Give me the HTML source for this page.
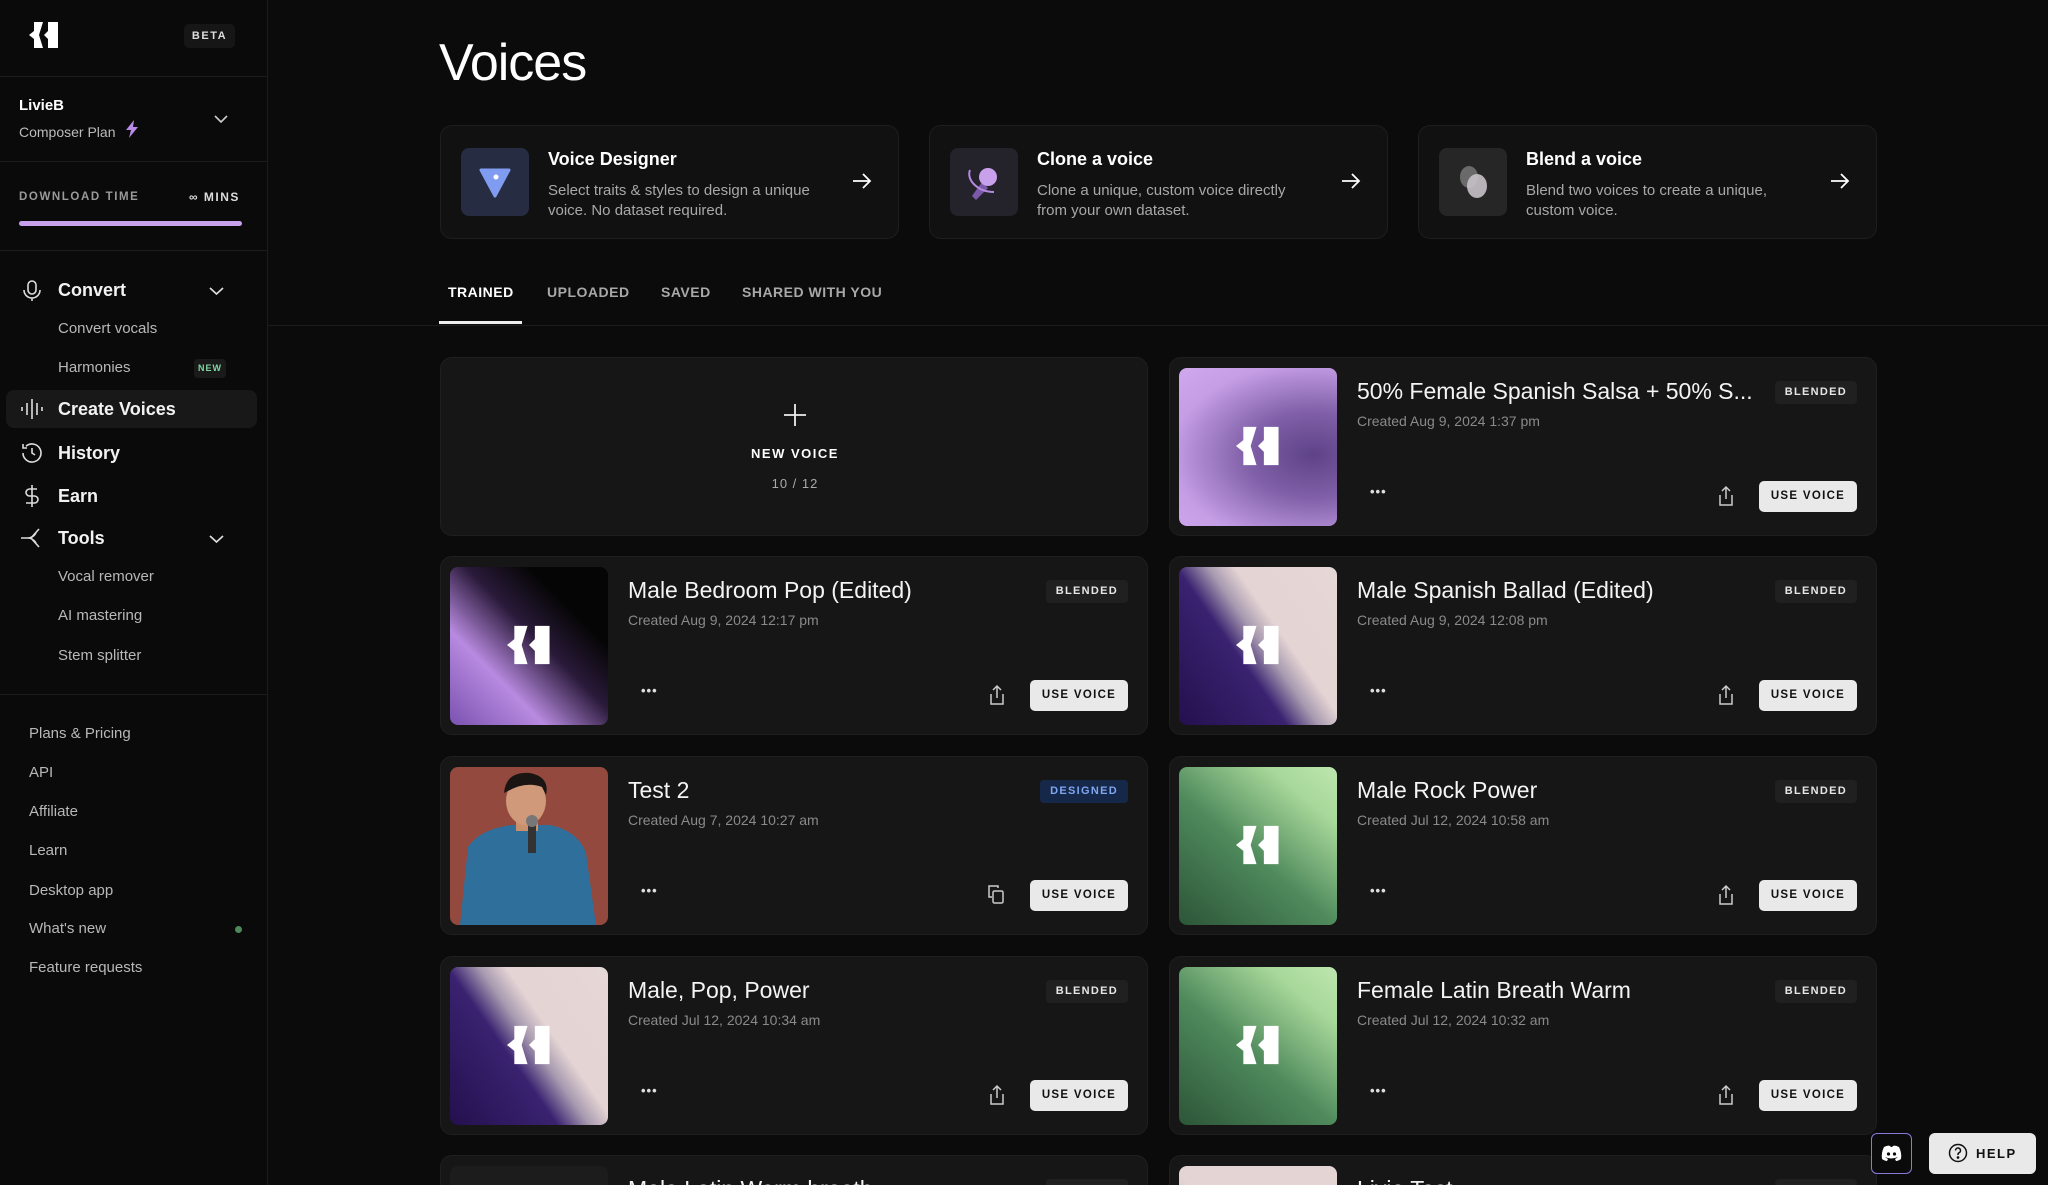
<!DOCTYPE html>
<html style="width:2048px;height:1185px;overflow:hidden"><head><meta charset="utf-8">
<style>
*{box-sizing:border-box;margin:0;padding:0}
html,body{width:2048px;height:1185px;overflow:hidden}
body{background:#0b0b0b;font-family:"Liberation Sans",sans-serif;color:#fff;position:relative}
.abs{position:absolute}
.side{position:absolute;left:0;top:0;width:268px;height:1185px;background:#0a0a0a;border-right:1px solid #1c1c1c}
.hr{position:absolute;left:0;width:268px;height:1px;background:#1c1c1c}
.nav{position:absolute;left:58px;font-size:18px;font-weight:bold;color:#f2f2f2}
.sub{position:absolute;left:58px;font-size:15px;color:#b8b8b8}
.low{position:absolute;left:29px;font-size:15px;color:#b8b8b8}
.ic{position:absolute;left:20px}
.card{position:absolute;width:708px;height:179px;background:#161616;border:1px solid #1f1f1f;border-radius:12px}
.card.cut{height:30px;overflow:hidden;border-bottom:none;border-radius:12px 12px 0 0}
.thumb{position:absolute;left:9px;top:10px;width:158px;height:158px;border-radius:8px;overflow:hidden}
.thumb svg.lg{position:absolute;left:57px;top:58px}
.title{position:absolute;left:187px;top:20px;font-size:23px;color:#f4f4f4;white-space:nowrap}
.date{position:absolute;left:187px;top:55px;font-size:14px;color:#8a8a8a}
.badge{position:absolute;right:19px;top:23px;height:23px;padding:0 10px;line-height:23px;font-size:11px;font-weight:bold;letter-spacing:1.3px;background:#202020;color:#e6e6e6;border-radius:4px}
.dots{position:absolute;left:200px;top:126px;font-size:13px;letter-spacing:1px;color:#ddd;font-weight:bold}
.use{position:absolute;right:19px;top:123px;width:98px;height:31px;background:#e9e9e9;color:#111;border-radius:5px;font-size:11.5px;font-weight:bold;letter-spacing:1.3px;text-align:center;line-height:31px}
.share{position:absolute;right:141px;top:127px}
.act{position:absolute;top:125px;width:459px;height:114px;background:#111;border:1px solid #1e1e1e;border-radius:12px}
.act .box{position:absolute;left:20px;top:22px;width:68px;height:68px;border-radius:8px}
.act .t{position:absolute;left:107px;top:23px;font-size:18px;font-weight:bold}
.act .d{position:absolute;left:107px;top:55px;font-size:15px;line-height:20px;color:#a8a8a8}
.act .ar{position:absolute;right:26px;top:46px}
.tab{position:absolute;top:284px;font-size:14px;font-weight:bold;letter-spacing:0.5px;color:#a8a8a8}
</style></head><body>

<div class="side">
  <svg class="abs" style="left:29px;top:22px" width="30" height="26" viewBox="0 0 30 26"><path d="M5 0H14L10 13L14 26H5V17L0 13L5 9Z" fill="#fff"/><path d="M19 0H29V26H19V17L15 13L19 9Z" fill="#fff"/></svg>
  <div class="abs" style="left:184px;top:24px;width:51px;height:24px;background:#161616;border-radius:5px;font-size:11px;font-weight:bold;letter-spacing:1.5px;text-align:center;line-height:24px;color:#ddd">BETA</div>
  <div class="hr" style="top:76px"></div>
  <div class="abs" style="left:19px;top:97px;font-size:15px;font-weight:bold">LivieB</div>
  <div class="abs" style="left:19px;top:124px;font-size:14px;color:#bbb">Composer Plan</div>
  <svg class="abs" style="left:125px;top:120px" width="14" height="18" viewBox="0 0 14 18"><path d="M9 0L1 10H6L4 18L13 7H8Z" fill="#b98ae6"/></svg>
  <svg class="abs" style="left:214px;top:114px" width="14" height="10" viewBox="0 0 14 10"><path d="M1 2L7 8L13 2" stroke="#ccc" stroke-width="1.6" fill="none"/></svg>
  <div class="hr" style="top:161px"></div>
  <div class="abs" style="left:19px;top:191px;font-size:11.5px;font-weight:bold;letter-spacing:1.6px;color:#9a9a9a">DOWNLOAD TIME</div>
  <div class="abs" style="left:189px;top:190px;font-size:12px;font-weight:bold;letter-spacing:1.5px;color:#ddd">∞ MINS</div>
  <div class="abs" style="left:19px;top:221px;width:223px;height:5px;border-radius:3px;background:#c9a0ec"></div>
  <div class="hr" style="top:250px"></div>

  <svg class="ic" style="top:279px" width="24" height="24" viewBox="0 0 24 24" fill="none" stroke="#ddd" stroke-width="1.6"><rect x="8" y="2" width="8" height="13" rx="4"/><path d="M4 11a8 8 0 0 0 16 0M12 19v3"/></svg>
  <div class="nav" style="top:280px">Convert</div>
  <svg class="abs" style="left:209px;top:286px" width="15" height="10" viewBox="0 0 15 10"><path d="M1 2L7.5 8L14 2" stroke="#ddd" stroke-width="1.7" fill="none"/></svg>
  <div class="sub" style="top:320px">Convert vocals</div>
  <div class="sub" style="top:359px">Harmonies</div>
  <div class="abs" style="left:194px;top:359px;width:32px;height:19px;background:#1a1a1a;border-radius:4px;font-size:9px;font-weight:bold;letter-spacing:1px;color:#7fd6a0;text-align:center;line-height:19px">NEW</div>
  <div class="abs" style="left:6px;top:390px;width:251px;height:38px;background:#181818;border-radius:8px"></div>
  <svg class="ic" style="top:398px" width="24" height="22" viewBox="0 0 24 22" stroke="#ddd" stroke-width="1.6"><path d="M2 9v4M7 5v12M12 1v20M17 5v12M22 9v4"/></svg>
  <div class="nav" style="top:399px">Create Voices</div>
  <svg class="ic" style="top:441px" width="24" height="24" viewBox="0 0 24 24" fill="none" stroke="#ddd" stroke-width="1.6"><path d="M3 12a9 9 0 1 0 3-6.7M3 3v4h4M12 7v5l3 2"/></svg>
  <div class="nav" style="top:443px">History</div>
  <svg class="ic" style="top:484px" width="24" height="24" viewBox="0 0 24 24" fill="none" stroke="#ddd" stroke-width="1.6"><path d="M12 1v22M17 5H9.5a3.5 3.5 0 0 0 0 7h5a3.5 3.5 0 0 1 0 7H6"/></svg>
  <div class="nav" style="top:486px">Earn</div>
  <svg class="ic" style="top:526px" width="24" height="24" viewBox="0 0 24 24" fill="none" stroke="#ddd" stroke-width="1.6"><path d="M1 12h7M19 3l-8 9 8 9M8 12c3 0 6-2 8-5M8 12c3 0 6 2 8 5"/></svg>
  <div class="nav" style="top:528px">Tools</div>
  <svg class="abs" style="left:209px;top:534px" width="15" height="10" viewBox="0 0 15 10"><path d="M1 2L7.5 8L14 2" stroke="#ddd" stroke-width="1.7" fill="none"/></svg>
  <div class="sub" style="top:568px">Vocal remover</div>
  <div class="sub" style="top:607px">AI mastering</div>
  <div class="sub" style="top:647px">Stem splitter</div>
  <div class="hr" style="top:694px"></div>
  <div class="low" style="top:725px">Plans &amp; Pricing</div>
  <div class="low" style="top:764px">API</div>
  <div class="low" style="top:803px">Affiliate</div>
  <div class="low" style="top:842px">Learn</div>
  <div class="low" style="top:882px">Desktop app</div>
  <div class="low" style="top:920px">What's new</div>
  <div class="abs" style="left:235px;top:926px;width:7px;height:7px;border-radius:50%;background:#4c8a5c"></div>
  <div class="low" style="top:959px">Feature requests</div>
</div>

<div class="abs" style="left:439px;top:33px;font-size:52px;letter-spacing:-1px">Voices</div>

<div class="act" style="left:440px">
  <div class="box" style="background:#262d42"><svg style="position:absolute;left:18px;top:20px" width="32" height="30" viewBox="0 0 32 30"><path d="M2 2H30L16 28Z" fill="#7f9cf0" stroke="#7f9cf0" stroke-width="3" stroke-linejoin="round"/><circle cx="17" cy="9" r="2.5" fill="#fff"/></svg></div>
  <div class="t">Voice Designer</div>
  <div class="d">Select traits &amp; styles to design a unique<br>voice. No dataset required.</div>
  <svg class="ar" width="20" height="18" viewBox="0 0 20 18" fill="none" stroke="#fff" stroke-width="1.8"><path d="M1 9h17M11 2l7 7-7 7"/></svg>
</div>
<div class="act" style="left:929px">
  <div class="box" style="background:#24222a"><svg style="position:absolute;left:14px;top:14px" width="40" height="40" viewBox="0 0 40 40"><path d="M8 34L18 20L24 26L12 38Z" fill="#7a5aa8"/><circle cx="24" cy="15" r="9" fill="#c9a0ec"/><path d="M6 8C2 18 14 30 30 30" stroke="#b48ae0" stroke-width="2" fill="none"/></svg></div>
  <div class="t">Clone a voice</div>
  <div class="d">Clone a unique, custom voice directly<br>from your own dataset.</div>
  <svg class="ar" width="20" height="18" viewBox="0 0 20 18" fill="none" stroke="#fff" stroke-width="1.8"><path d="M1 9h17M11 2l7 7-7 7"/></svg>
</div>
<div class="act" style="left:1418px">
  <div class="box" style="background:#262626"><svg style="position:absolute;left:12px;top:15px" width="44" height="40" viewBox="0 0 44 40"><ellipse cx="18" cy="14" rx="9" ry="11" fill="#6a6a6a"/><ellipse cx="26" cy="23" rx="10" ry="12" fill="#c8c2c8" opacity=".9"/></svg></div>
  <div class="t">Blend a voice</div>
  <div class="d">Blend two voices to create a unique,<br>custom voice.</div>
  <svg class="ar" width="20" height="18" viewBox="0 0 20 18" fill="none" stroke="#fff" stroke-width="1.8"><path d="M1 9h17M11 2l7 7-7 7"/></svg>
</div>

<div class="tab" style="left:448px;color:#fff">TRAINED</div>
<div class="tab" style="left:547px">UPLOADED</div>
<div class="tab" style="left:661px">SAVED</div>
<div class="tab" style="left:742px">SHARED WITH YOU</div>
<div class="abs" style="left:268px;top:325px;width:1780px;height:1px;background:#1c1c1c"></div>
<div class="abs" style="left:439px;top:321px;width:83px;height:3px;background:#eee"></div>

<div class="card" style="left:440px;top:357px">
  <svg class="abs" style="left:342px;top:45px" width="24" height="24" viewBox="0 0 24 24" stroke="#eee" stroke-width="1.8"><path d="M12 1v22M1 12h22"/></svg>
  <div class="abs" style="left:0;width:708px;text-align:center;top:88px;font-size:13px;font-weight:bold;letter-spacing:1.5px">NEW VOICE</div>
  <div class="abs" style="left:0;width:708px;text-align:center;top:118px;font-size:13px;color:#aaa;letter-spacing:1px">10 / 12</div>
</div>

<div class="card" style="left:1169px;top:357px">
  <div class="thumb" style="background:radial-gradient(ellipse at 85% 55%,#5e4288 0%,#8060a8 35%,#c59ee6 75%,#cfa8ee 100%)"><svg class="lg" width="44" height="40" viewBox="0 0 30 26"><path d="M5 0H14L10 13L14 26H5V17L0 13L5 9Z" fill="#fff"/><path d="M19 0H29V26H19V17L15 13L19 9Z" fill="#fff"/></svg></div>
  <div class="title">50% Female Spanish Salsa + 50% S...</div>
  <div class="date">Created Aug 9, 2024 1:37 pm</div>
  <div class="badge">BLENDED</div>
  <div class="dots">•••</div>
  <svg class="share" width="18" height="22" viewBox="0 0 18 22" fill="none" stroke="#ccc" stroke-width="1.5"><path d="M9 14V2M5 6l4-4 4 4M3 10v10h12V10"/></svg>
  <div class="use">USE VOICE</div>
</div>

<div class="card" style="left:440px;top:556px">
  <div class="thumb" style="background:linear-gradient(45deg,#7a52b0 0%,#b88ae0 30%,#2a1a3a 55%,#050505 75%)"><svg class="lg" width="44" height="40" viewBox="0 0 30 26"><path d="M5 0H14L10 13L14 26H5V17L0 13L5 9Z" fill="#fff"/><path d="M19 0H29V26H19V17L15 13L19 9Z" fill="#fff"/></svg></div>
  <div class="title">Male Bedroom Pop (Edited)</div>
  <div class="date">Created Aug 9, 2024 12:17 pm</div>
  <div class="badge">BLENDED</div>
  <div class="dots">•••</div>
  <svg class="share" width="18" height="22" viewBox="0 0 18 22" fill="none" stroke="#ccc" stroke-width="1.5"><path d="M9 14V2M5 6l4-4 4 4M3 10v10h12V10"/></svg>
  <div class="use">USE VOICE</div>
</div>

<div class="card" style="left:1169px;top:556px">
  <div class="thumb" style="background:linear-gradient(55deg,#24104e 0%,#3a2270 40%,#a89ab0 52%,#e4d4d4 62%,#e6d8d6 100%)"><svg class="lg" width="44" height="40" viewBox="0 0 30 26"><path d="M5 0H14L10 13L14 26H5V17L0 13L5 9Z" fill="#fff"/><path d="M19 0H29V26H19V17L15 13L19 9Z" fill="#fff"/></svg></div>
  <div class="title">Male Spanish Ballad (Edited)</div>
  <div class="date">Created Aug 9, 2024 12:08 pm</div>
  <div class="badge">BLENDED</div>
  <div class="dots">•••</div>
  <svg class="share" width="18" height="22" viewBox="0 0 18 22" fill="none" stroke="#ccc" stroke-width="1.5"><path d="M9 14V2M5 6l4-4 4 4M3 10v10h12V10"/></svg>
  <div class="use">USE VOICE</div>
</div>

<div class="card" style="left:440px;top:756px">
  <div class="thumb" style="background:#93493e"><svg width="158" height="158" viewBox="0 0 158 158"><path d="M10 158L18 80Q30 62 62 58L100 58Q128 64 136 86L146 158Z" fill="#2f6f9c"/><rect x="66" y="46" width="22" height="18" fill="#c9906e"/><ellipse cx="76" cy="34" rx="20" ry="24" fill="#d09a7a"/><path d="M54 26Q56 4 80 6Q100 10 96 28L92 20Q76 14 58 24Z" fill="#1a1412"/><rect x="78" y="56" width="8" height="30" fill="#333"/><circle cx="82" cy="54" r="6" fill="#777"/></svg></div>
  <div class="title">Test 2</div>
  <div class="date">Created Aug 7, 2024 10:27 am</div>
  <div class="badge" style="background:#16284a;color:#7fa6f0">DESIGNED</div>
  <div class="dots">•••</div>
  <svg class="share" width="20" height="20" viewBox="0 0 20 20" fill="none" stroke="#ccc" stroke-width="1.5"><path d="M12 4V2H3v11h3"/><rect x="7" y="7" width="10" height="12" rx="1.5"/></svg>
  <div class="use">USE VOICE</div>
</div>

<div class="card" style="left:1169px;top:756px">
  <div class="thumb" style="background:linear-gradient(40deg,#2c5538 0%,#4f8a5c 45%,#a8d89a 80%,#bde6ae 100%)"><svg class="lg" width="44" height="40" viewBox="0 0 30 26"><path d="M5 0H14L10 13L14 26H5V17L0 13L5 9Z" fill="#fff"/><path d="M19 0H29V26H19V17L15 13L19 9Z" fill="#fff"/></svg></div>
  <div class="title">Male Rock Power</div>
  <div class="date">Created Jul 12, 2024 10:58 am</div>
  <div class="badge">BLENDED</div>
  <div class="dots">•••</div>
  <svg class="share" width="18" height="22" viewBox="0 0 18 22" fill="none" stroke="#ccc" stroke-width="1.5"><path d="M9 14V2M5 6l4-4 4 4M3 10v10h12V10"/></svg>
  <div class="use">USE VOICE</div>
</div>

<div class="card" style="left:440px;top:956px">
  <div class="thumb" style="background:linear-gradient(55deg,#24104e 0%,#3a2270 40%,#a89ab0 52%,#e4d4d4 62%,#e6d8d6 100%)"><svg class="lg" width="44" height="40" viewBox="0 0 30 26"><path d="M5 0H14L10 13L14 26H5V17L0 13L5 9Z" fill="#fff"/><path d="M19 0H29V26H19V17L15 13L19 9Z" fill="#fff"/></svg></div>
  <div class="title">Male, Pop, Power</div>
  <div class="date">Created Jul 12, 2024 10:34 am</div>
  <div class="badge">BLENDED</div>
  <div class="dots">•••</div>
  <svg class="share" width="18" height="22" viewBox="0 0 18 22" fill="none" stroke="#ccc" stroke-width="1.5"><path d="M9 14V2M5 6l4-4 4 4M3 10v10h12V10"/></svg>
  <div class="use">USE VOICE</div>
</div>

<div class="card" style="left:1169px;top:956px">
  <div class="thumb" style="background:linear-gradient(40deg,#2c5538 0%,#4f8a5c 45%,#a8d89a 80%,#bde6ae 100%)"><svg class="lg" width="44" height="40" viewBox="0 0 30 26"><path d="M5 0H14L10 13L14 26H5V17L0 13L5 9Z" fill="#fff"/><path d="M19 0H29V26H19V17L15 13L19 9Z" fill="#fff"/></svg></div>
  <div class="title">Female Latin Breath Warm</div>
  <div class="date">Created Jul 12, 2024 10:32 am</div>
  <div class="badge">BLENDED</div>
  <div class="dots">•••</div>
  <svg class="share" width="18" height="22" viewBox="0 0 18 22" fill="none" stroke="#ccc" stroke-width="1.5"><path d="M9 14V2M5 6l4-4 4 4M3 10v10h12V10"/></svg>
  <div class="use">USE VOICE</div>
</div>

<div class="card cut" style="left:440px;top:1155px">
  <div class="thumb" style="background:#1c1c1c"></div>
  <div class="title">Male Latin Warm breath</div>
  <div class="badge">BLENDED</div>
</div>
<div class="card cut" style="left:1169px;top:1155px">
  <div class="thumb" style="background:linear-gradient(55deg,#a89ab0 0%,#e4d4d4 40%)"></div>
  <div class="title">Livie Test</div>
  <div class="badge">BLENDED</div>
</div>

<div class="abs" style="left:1871px;top:1133px;width:41px;height:41px;border-radius:6px;background:#0b0b0b;border:1.5px solid #8a7ad8"></div>
<svg class="abs" style="left:1881px;top:1145px" width="21" height="16" viewBox="0 0 21 16"><path d="M3 2Q7 0 9 1L10 2H11L12 1Q14 0 18 2Q21 8 20 14Q17 16 15 16L14 14Q16 13 17 12Q10 15 4 12Q5 13 7 14L6 16Q4 16 1 14Q0 8 3 2Z" fill="#fff"/><circle cx="7.5" cy="9" r="1.6" fill="#0b0b0b"/><circle cx="13.5" cy="9" r="1.6" fill="#0b0b0b"/></svg>
<div class="abs" style="left:1929px;top:1133px;width:107px;height:41px;border-radius:6px;background:#e9e9e9"></div>
<svg class="abs" style="left:1948px;top:1143px" width="20" height="20" viewBox="0 0 20 20" fill="none" stroke="#111" stroke-width="1.5"><circle cx="10" cy="10" r="8.5"/><path d="M7.5 7.5a2.5 2.5 0 1 1 3.5 2.3c-.7.3-1 .8-1 1.5v.7"/><circle cx="10" cy="14.5" r=".6" fill="#111"/></svg>
<div class="abs" style="left:1976px;top:1146px;font-size:13px;font-weight:bold;letter-spacing:1.5px;color:#111">HELP</div>
</body></html>
